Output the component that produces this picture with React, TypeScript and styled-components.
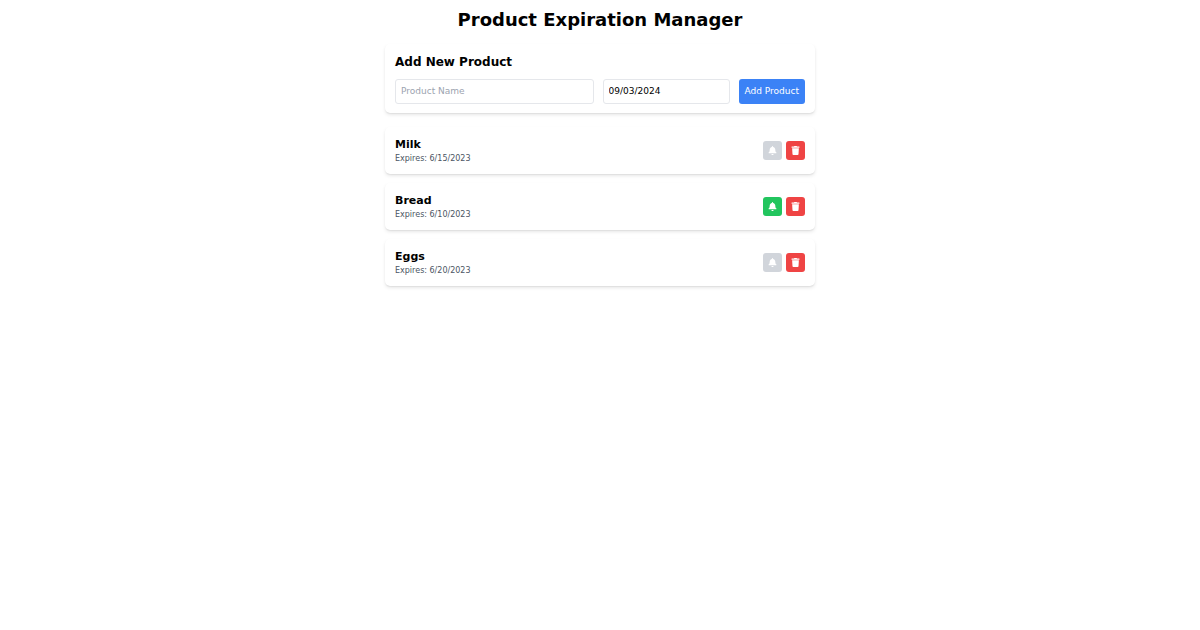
import React, { useState } from "react";
import styled, { createGlobalStyle } from "styled-components";
import { FaBell, FaTrash } from "react-icons/fa";

const GlobalStyle = createGlobalStyle`
  *, *::before, *::after { box-sizing: border-box; }
  body {
    margin: 0;
    background: #fff;
    color: #000;
    font-family: "DejaVu Sans", sans-serif;
    font-size: 9px;
    line-height: 14px;
  }
  h1, h2, h3, p, ul { margin: 0; padding: 0; }
  button, input { font: inherit; }
`;

const Page = styled.main`
  max-width: 450px;
  margin: 0 auto;
  padding: 10px;
`;

const Title = styled.h1`
  margin-bottom: 14px;
  font-size: 18px;
  line-height: 20px;
  font-weight: 700;
  text-align: center;
  white-space: nowrap;
`;

const Card = styled.div`
  padding: 9px 10px;
  background: #fff;
  border-radius: 5px;
  box-shadow: 0 2px 4px -1px rgba(0, 0, 0, 0.14), 0 1px 2px -1px rgba(0, 0, 0, 0.14);
`;

const FormCard = styled(Card).attrs({ as: "section" })`
  margin-bottom: 14px;
`;

const FormTitle = styled.h2`
  margin-bottom: 8px;
  font-size: 12px;
  line-height: 18px;
  font-weight: 700;
`;

const Form = styled.form`
  display: flex;
  gap: 9px;
`;

const Field = styled.input<{ $grow?: boolean }>`
  flex: ${(p) => (p.$grow ? "1 1 0" : "0 1 127px")};
  min-width: 0;
  height: 25px;
  padding: 4px 5px 6px;
  border: 1px solid #e5e7eb;
  border-radius: 3px;
  background: #fff;
  color: #000;
  &::placeholder { color: #9ca3af; opacity: 1; }
`;

const SubmitButton = styled.button`
  flex: none;
  padding: 4px 6px 6px;
  border: 0;
  border-radius: 3px;
  background: #3b82f6;
  color: #fff;
  cursor: pointer;
`;

const ProductList = styled.ul`
  display: flex;
  flex-direction: column;
  gap: 9px;
  list-style: none;
`;

const ProductCard = styled(Card).attrs({ as: "li" })`
  display: flex;
  align-items: center;
  justify-content: space-between;
`;

const ProductName = styled.h3`
  font-size: 11px;
  line-height: 17px;
  font-weight: 700;
`;

const Expiry = styled.p`
  font-size: 8px;
  line-height: 12px;
  color: #4b5563;
`;

const Actions = styled.div`
  display: flex;
  gap: 4px;
`;

const colors = { on: "#22c55e", off: "#d1d5db", danger: "#ef4444" };

const IconButton = styled.button<{ $tone: keyof typeof colors }>`
  display: flex;
  padding: 5px;
  border: 0;
  border-radius: 3px;
  background: ${(p) => colors[p.$tone]};
  color: #fff;
  font-size: 9px;
  cursor: pointer;
`;

const initial = [
  { id: 1, name: "Milk", date: "6/15/2023", notify: false },
  { id: 2, name: "Bread", date: "6/10/2023", notify: true },
  { id: 3, name: "Eggs", date: "6/20/2023", notify: false },
];

export default function App() {
  const [products, setProducts] = useState(initial);
  const [name, setName] = useState("");
  const [date, setDate] = useState("09/03/2024");

  const add = (e: React.FormEvent) => {
    e.preventDefault();
    if (!name) return;
    setProducts([...products, { id: Date.now(), name, date, notify: false }]);
    setName("");
  };

  return (
    <>
      <GlobalStyle />
      <Page>
        <Title>Product Expiration Manager</Title>
        <FormCard>
          <FormTitle>Add New Product</FormTitle>
          <Form onSubmit={add}>
            <Field
              $grow
              type="text"
              aria-label="Product Name"
              placeholder="Product Name"
              value={name}
              onChange={(e) => setName(e.target.value)}
            />
            <Field
              type="text"
              aria-label="Expiration date"
              value={date}
              onChange={(e) => setDate(e.target.value)}
            />
            <SubmitButton type="submit">Add Product</SubmitButton>
          </Form>
        </FormCard>
        <ProductList>
          {products.map((p) => (
            <ProductCard key={p.id}>
              <div>
                <ProductName>{p.name}</ProductName>
                <Expiry>Expires: {p.date}</Expiry>
              </div>
              <Actions>
                <IconButton
                  type="button"
                  $tone={p.notify ? "on" : "off"}
                  aria-label={`Notify about ${p.name}`}
                  aria-pressed={p.notify}
                  onClick={() =>
                    setProducts(products.map((q) => (q.id === p.id ? { ...q, notify: !q.notify } : q)))
                  }
                >
                  <FaBell />
                </IconButton>
                <IconButton
                  type="button"
                  $tone="danger"
                  aria-label={`Delete ${p.name}`}
                  onClick={() => setProducts(products.filter((q) => q.id !== p.id))}
                >
                  <FaTrash />
                </IconButton>
              </Actions>
            </ProductCard>
          ))}
        </ProductList>
      </Page>
    </>
  );
}
